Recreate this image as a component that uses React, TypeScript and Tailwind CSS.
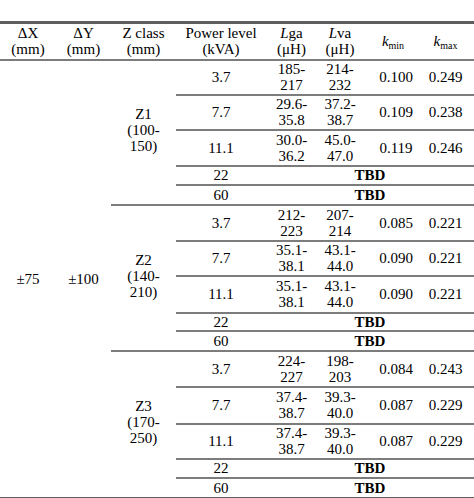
import React from "react"

type Row = { p: string; lga?: string[]; lva?: string[]; kmin?: string; kmax?: string; h: string }

const groups: { z: string[]; rows: Row[] }[] = [
  {
    z: ["Z1", "(100-", "150)"],
    rows: [
      { p: "3.7", lga: ["185-", "217"], lva: ["214-", "232"], kmin: "0.100", kmax: "0.249", h: "h-[35px]" },
      { p: "7.7", lga: ["29.6-", "35.8"], lva: ["37.2-", "38.7"], kmin: "0.109", kmax: "0.238", h: "h-[35px]" },
      { p: "11.1", lga: ["30.0-", "36.2"], lva: ["45.0-", "47.0"], kmin: "0.119", kmax: "0.246", h: "h-[36px]" },
      { p: "22", h: "h-[19px]" },
      { p: "60", h: "h-[20px]" },
    ],
  },
  {
    z: ["Z2", "(140-", "210)"],
    rows: [
      { p: "3.7", lga: ["212-", "223"], lva: ["207-", "214"], kmin: "0.085", kmax: "0.221", h: "h-[36px]" },
      { p: "7.7", lga: ["35.1-", "38.1"], lva: ["43.1-", "44.0"], kmin: "0.090", kmax: "0.221", h: "h-[35px]" },
      { p: "11.1", lga: ["35.1-", "38.1"], lva: ["43.1-", "44.0"], kmin: "0.090", kmax: "0.221", h: "h-[37px]" },
      { p: "22", h: "h-[18px]" },
      { p: "60", h: "h-[20px]" },
    ],
  },
  {
    z: ["Z3", "(170-", "250)"],
    rows: [
      { p: "3.7", lga: ["224-", "227"], lva: ["198-", "203"], kmin: "0.084", kmax: "0.243", h: "h-[36px]" },
      { p: "7.7", lga: ["37.4-", "38.7"], lva: ["39.3-", "40.0"], kmin: "0.087", kmax: "0.229", h: "h-[37px]" },
      { p: "11.1", lga: ["37.4-", "38.7"], lva: ["39.3-", "40.0"], kmin: "0.087", kmax: "0.229", h: "h-[35px]" },
      { p: "22", h: "h-[19px]" },
      { p: "60", h: "h-[19px]" },
    ],
  },
]

function Lines({ v }: { v: string[] }) {
  return (
    <>
      {v.map((t, i) => (
        <div key={i}>{t}</div>
      ))}
    </>
  )
}

export default function App() {
  const line = "border-b-2 border-[#7c7c7c]"
  return (
    <div className="w-[474px] h-[498px] bg-white pt-[21px] text-black" style={{ fontFamily: '"Liberation Serif", "Times New Roman", serif' }}>
      <table className="w-[474px] table-fixed border-collapse text-[15px] leading-[16px] text-center">
        <colgroup>
          <col className="w-[56px]" />
          <col className="w-[55px]" />
          <col className="w-[65px]" />
          <col className="w-[90px]" />
          <col className="w-[51px]" />
          <col className="w-[46px]" />
          <col className="w-[60px]" />
          <col className="w-[51px]" />
        </colgroup>
        <thead>
          <tr className="h-[37px] border-t-[3px] border-t-[#5e5e5e] border-b-2 border-b-[#7c7c7c] align-middle">
            <th className="font-normal p-0">
              <div>ΔX</div>
              <div>(mm)</div>
            </th>
            <th className="font-normal p-0">
              <div>ΔY</div>
              <div>(mm)</div>
            </th>
            <th className="font-normal p-0">
              <div>Z class</div>
              <div>(mm)</div>
            </th>
            <th className="font-normal p-0">
              <div>Power level</div>
              <div>(kVA)</div>
            </th>
            <th className="font-normal p-0">
              <div>
                <i>L</i>ga
              </div>
              <div>(μH)</div>
            </th>
            <th className="font-normal p-0">
              <div>
                <i>L</i>va
              </div>
              <div>(μH)</div>
            </th>
            <th className="font-normal p-0">
              <i>k</i>
              <sub className="text-[10px]">min</sub>
            </th>
            <th className="font-normal p-0 pr-[6px]">
              <i>k</i>
              <sub className="text-[10px]">max</sub>
            </th>
          </tr>
        </thead>
        <tbody>
          {groups.map((g, gi) =>
            g.rows.map((r, ri) => {
              const last = gi === groups.length - 1 && ri === g.rows.length - 1
              const b = last ? "" : line
              return (
                <tr key={`${gi}-${ri}`} className={r.h}>
                  {gi === 0 && ri === 0 && (
                    <>
                      <td rowSpan={15} className="p-0 align-middle">±75</td>
                      <td rowSpan={15} className="p-0 align-middle">±100</td>
                    </>
                  )}
                  {ri === 0 && (
                    <td rowSpan={g.rows.length} className={`p-0 align-middle pb-[4px] ${gi === groups.length - 1 ? "" : line}`}>
                      <Lines v={g.z} />
                    </td>
                  )}
                  <td className={`p-0 ${b}`}>{r.p}</td>
                  {r.lga ? (
                    <>
                      <td className={`p-0 ${b}`}>
                        <Lines v={r.lga} />
                      </td>
                      <td className={`p-0 ${b}`}>
                        <Lines v={r.lva!} />
                      </td>
                      <td className={`p-0 pl-[6px] ${b}`}>{r.kmin}</td>
                      <td className={`p-0 pr-[6px] ${b}`}>{r.kmax}</td>
                    </>
                  ) : (
                    <td colSpan={4} className={`p-0 font-bold ${b}`}>
                      TBD
                    </td>
                  )}
                </tr>
              )
            })
          )}
        </tbody>
      </table>
      <div className="h-[3px] bg-[#5e5e5e]" />
    </div>
  )
}
